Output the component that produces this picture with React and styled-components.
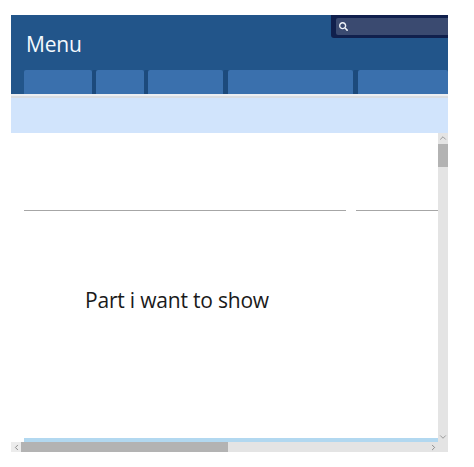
import React from "react";
import styled, { createGlobalStyle } from "styled-components";
import { FaSearch } from "react-icons/fa";
import { FiChevronUp, FiChevronDown, FiChevronLeft, FiChevronRight } from "react-icons/fi";

const TABS = [
  { width: 68, space: 0 },
  { width: 48, space: 4 },
  { width: 75, space: 4 },
  { width: 125, space: 5 },
  { width: 90, space: 5 },
];

const GlobalStyle = createGlobalStyle`
  html, body {
    margin: 0;
    background: #fff;
    font-family: "Open Sans", "Noto Sans", sans-serif;
  }
`;

const Frame = styled.div`
  width: 437px;
  margin: 15px 0 0 11px;
  display: flex;
  flex-direction: column;
`;

const Header = styled.header`
  height: 79px;
  background: #22558a;
  display: flex;
  flex-direction: column;
  justify-content: space-between;
`;

const TopRow = styled.div`
  display: flex;
  justify-content: space-between;
  align-items: flex-start;
`;

const Title = styled.div`
  margin: 15px 0 0 15px;
  color: #f4f9fd;
  font-size: 21px;
  line-height: 28px;
  letter-spacing: -0.2px;
`;

const SearchBox = styled.div`
  width: 112px;
  height: 17px;
  padding: 3px 0 3px 5px;
  background: #10204d;
  border-bottom-left-radius: 3px;
`;

const SearchField = styled.div`
  height: 17px;
  padding-left: 3px;
  background: #3a4a70;
  border-radius: 2px 0 0 2px;
  display: flex;
  align-items: center;
  color: #eef2f7;
  font-size: 9px;
`;

const Tabs = styled.nav`
  display: flex;
  padding-left: 13px;
  overflow: hidden;
`;

const Tab = styled.div`
  flex: none;
  width: ${(p) => p.$width}px;
  height: 24px;
  margin-left: ${(p) => p.$space}px;
  background: #3a70ad;
  border-radius: 2px 2px 0 0;
  box-shadow: -${(p) => p.$space}px 0 0 #1c4a7c;
`;

const Rule = styled.div`
  height: 4px;
  background: linear-gradient(#eceef1 0 50%, #d8dce1 50%);
`;

const Banner = styled.div`
  height: 35px;
  background: #d1e4fc;
`;

const Viewport = styled.div`
  display: flex;
  height: 309px;
`;

const Content = styled.main`
  flex: 1;
  display: flex;
  flex-direction: column;
  justify-content: flex-end;
  padding-left: 13px;
`;

const Divider = styled.div`
  display: flex;
  gap: 10px;
  margin-bottom: 75px;
`;

const DividerLine = styled.div`
  height: 1px;
  background: #a6a6a6;
  flex: ${(p) => (p.$wide ? "none" : 1)};
  width: ${(p) => (p.$wide ? "322px" : "auto")};
`;

const Message = styled.p`
  margin: 0 0 124px 61px;
  color: #1a1a1a;
  font-size: 21px;
  line-height: 28px;
  letter-spacing: -0.2px;
`;

const BottomStripe = styled.div`
  height: 4px;
  background: #b2d8f0;
`;

const VScroll = styled.div`
  width: 10px;
  background: #e4e4e4;
  display: flex;
  flex-direction: column;
  justify-content: space-between;
  align-items: center;
  color: #8c8c8c;
`;

const VThumb = styled.div`
  width: 10px;
  height: 23px;
  margin-top: 1px;
  background: #b3b3b3;
`;

const VTop = styled.div`
  display: flex;
  flex-direction: column;
`;

const HScroll = styled.div`
  height: 10px;
  background: #e4e4e4;
  display: flex;
  align-items: center;
  color: #707070;
`;

const HButton = styled.div`
  width: 10px;
  height: 10px;
  flex: none;
  display: flex;
  align-items: center;
  justify-content: center;
  background: #ececec;
`;

const HThumb = styled.div`
  width: 207px;
  height: 10px;
  background: #b3b3b3;
`;

const HTrack = styled.div`
  flex: 1;
  display: flex;
  justify-content: flex-end;
  padding-right: 10px;
`;

export default function App() {
  return (
    <>
      <GlobalStyle />
      <Frame>
        <Header>
          <TopRow>
            <Title>Menu</Title>
            <SearchBox>
              <SearchField>
                <FaSearch />
              </SearchField>
            </SearchBox>
          </TopRow>
          <Tabs>
            {TABS.map((tab, i) => (
              <Tab key={i} $width={tab.width} $space={tab.space} />
            ))}
          </Tabs>
        </Header>
        <Rule />
        <Banner />
        <Viewport>
          <Content>
            <Divider>
              <DividerLine $wide />
              <DividerLine />
            </Divider>
            <Message>Part i want to show</Message>
            <BottomStripe />
          </Content>
          <VScroll>
            <VTop>
              <FiChevronUp size={10} />
              <VThumb />
            </VTop>
            <FiChevronDown size={10} />
          </VScroll>
        </Viewport>
        <HScroll>
          <HButton>
            <FiChevronLeft size={9} />
          </HButton>
          <HThumb />
          <HTrack>
            <FiChevronRight size={9} />
          </HTrack>
        </HScroll>
      </Frame>
    </>
  );
}
